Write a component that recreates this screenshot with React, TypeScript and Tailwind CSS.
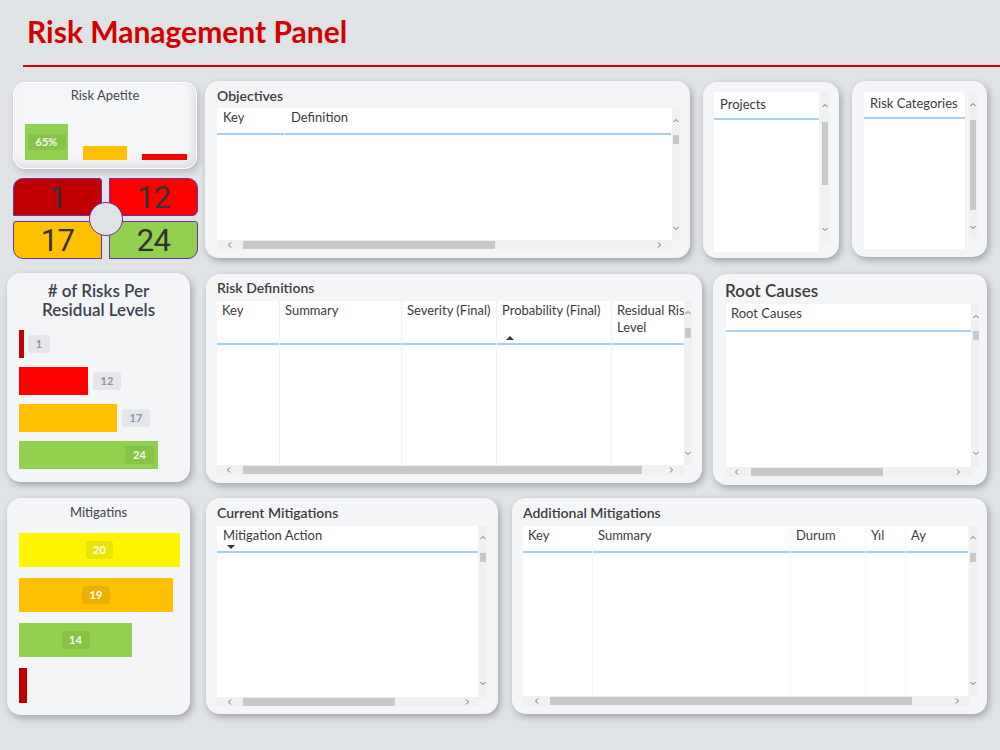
import React from 'react';

type Dir = 'up' | 'down' | 'left' | 'right';

const Chev = ({ dir }: { dir: Dir }) => {
  const pts = {
    up: '1.5,5 4,2.5 6.5,5',
    down: '1.5,3 4,5.5 6.5,3',
    left: '5,1.5 2.5,4 5,6.5',
    right: '3,1.5 5.5,4 3,6.5',
  }[dir];
  return (
    <svg width="8" height="8" viewBox="0 0 8 8" className="block shrink-0">
      <polyline points={pts} fill="none" stroke="#707070" strokeWidth="1" />
    </svg>
  );
};

const VScroll = ({ box, up, thumb, down }: { box: string; up: string; thumb: string; down: string }) => (
  <div className={`flex shrink-0 flex-col items-center bg-[#f0f0f0] ${box}`}>
    <div className={up}>
      <Chev dir="up" />
    </div>
    <div className={`w-[6px] bg-[#c8c8c8] ${thumb}`} />
    <div className="flex-1" />
    <div className={down}>
      <Chev dir="down" />
    </div>
  </div>
);

const HScroll = ({ box, left, thumb, right }: { box: string; left: string; thumb: string; right: string }) => (
  <div className={`flex shrink-0 items-center bg-[#f0f0f0] ${box}`}>
    <div className={left}>
      <Chev dir="left" />
    </div>
    <div className={`h-[8px] bg-[#c8c8c8] ${thumb}`} />
    <div className="flex-1" />
    <div className={right}>
      <Chev dir="right" />
    </div>
  </div>
);

const SortUp = () => (
  <div className="ml-[4px] mt-auto mb-[3px] h-0 w-0 border-x-[4px] border-b-[4px] border-x-transparent border-b-[#333]" />
);
const SortDown = () => (
  <div className="ml-[4px] mt-[1px] h-0 w-0 border-x-[4px] border-t-[4px] border-x-transparent border-t-[#333]" />
);

type Col = { label: React.ReactNode; w: string; sort?: React.ReactNode };

// line = colour of the column separators running through the body
const Columns = ({
  cols,
  head,
  pad = 'px-[5px]',
  line = 'border-[#f1f1f1]',
}: {
  cols: Col[];
  head: string;
  pad?: string;
  line?: string;
}) => (
  <div className="flex h-full">
    {cols.map((c, i) => (
      <div key={i} className={`flex shrink-0 flex-col border-r ${line} ${c.w}`}>
        <div
          className={`flex flex-col border-b-2 border-[#a3d1f5] pt-[1px] text-[13px] leading-[17px] text-[#3b3b3b] ${pad} ${head}`}
        >
          <span>{c.label}</span>
          {c.sort}
        </div>
      </div>
    ))}
  </div>
);

const Table = ({
  white,
  children,
  vs,
  hs,
}: {
  white: string;
  children: React.ReactNode;
  vs: React.ReactNode;
  hs?: React.ReactNode;
}) => (
  <div className="flex flex-col">
    <div className="flex items-start">
      <div className={`shrink-0 overflow-hidden bg-white ${white}`}>{children}</div>
      {vs}
    </div>
    {hs}
  </div>
);

const Panel = ({ className, children }: { className: string; children?: React.ReactNode }) => (
  <div className={`shrink-0 rounded-[14px] bg-[#f4f5f7] shadow-[2px_3px_7px_rgba(0,0,0,0.28)] ${className}`}>
    {children}
  </div>
);

const Title = ({ children, className = '' }: { children: React.ReactNode; className?: string }) => (
  <div className={`text-[14px] font-semibold leading-[18px] text-[#3d3d3d] ${className}`}>{children}</div>
);

const Tag = ({ children, className }: { children: React.ReactNode; className: string }) => (
  <div className={`flex h-[18px] items-center justify-center rounded-[3px] text-[11px] font-bold ${className}`}>
    {children}
  </div>
);

const RiskApetite = () => (
  <div className="flex h-[87px] w-[184px] flex-col rounded-[12px] border border-white bg-[#f5f6f7] pt-[4px] shadow-[inset_-3px_-4px_8px_rgba(0,0,0,0.1),2px_3px_6px_rgba(0,0,0,0.18)]">
    <div className="text-center text-[13px] leading-[16px] text-[#444a55]">Risk Apetite</div>
    <div className="ml-[11px] flex h-[57px] items-end gap-[15px]">
      <div className="flex h-[36px] w-[43px] items-center justify-center bg-[#92d050]">
        <div className="flex h-[16px] w-[38px] items-center justify-center bg-[#86c447] text-[11px] font-bold text-[#f3f8ec]">
          65%
        </div>
      </div>
      <div className="h-[14px] w-[44px] bg-[#ffc000]" />
      <div className="h-[6px] w-[45px] bg-[#ff0000]" />
    </div>
  </div>
);

const Quadrant = () => {
  const num = "text-[31px] leading-none tracking-tight text-[#333] font-['Roboto',sans-serif]";
  return (
    <div className="relative mt-[9px] grid h-[81px] w-[185px] grid-cols-2 grid-rows-2 gap-x-[7px] gap-y-[5px]">
      <div className={`flex items-center justify-center rounded-tl-[10px] rounded-tr-[3px] border border-[#7030a0] bg-[#c00000] ${num}`}>
        1
      </div>
      <div className={`flex items-center justify-center rounded-tr-[10px] rounded-br-[6px] border border-[#7030a0] bg-[#ff0000] ${num}`}>
        12
      </div>
      <div className={`flex items-center justify-center rounded-bl-[10px] rounded-tl-[3px] border border-[#7030a0] bg-[#ffc000] ${num}`}>
        17
      </div>
      <div className={`flex items-center justify-center rounded-br-[10px] rounded-tr-[3px] border border-[#7030a0] bg-[#92d050] ${num}`}>
        24
      </div>
      {/* round cut-out in the middle of the four tiles */}
      <div className="absolute left-1/2 top-1/2 h-[34px] w-[34px] -translate-x-1/2 -translate-y-1/2 rounded-full border border-[#7030a0] bg-[#dfe3e6]" />
    </div>
  );
};

const RisksPerLevel = () => (
  <Panel className="h-[209px] w-[183px] pt-[8px]">
    <div className="text-center text-[17px] font-semibold leading-[19px] text-[#3d4250]">
      # of Risks Per
      <br />
      Residual Levels
    </div>
    <div className="ml-[12px] mt-[11px] flex flex-col gap-[9px]">
      <div className="flex h-[28px] items-center gap-[4px]">
        <div className="h-full w-[5px] bg-[#c00000]" />
        <Tag className="w-[22px] bg-[#e4e6ea] text-[#8c95a6]">1</Tag>
      </div>
      <div className="flex h-[28px] items-center gap-[5px]">
        <div className="h-full w-[69px] bg-[#ff0000]" />
        <Tag className="w-[28px] bg-[#e4e6ea] text-[#8c95a6]">12</Tag>
      </div>
      <div className="flex h-[28px] items-center gap-[5px]">
        <div className="h-full w-[98px] bg-[#ffc000]" />
        <Tag className="w-[28px] bg-[#e4e6ea] text-[#8c95a6]">17</Tag>
      </div>
      <div className="flex h-[28px] w-[139px] items-center justify-end bg-[#92d050] pr-[4px]">
        <Tag className="w-[29px] bg-[#86c447] text-[#f4f9ee]">24</Tag>
      </div>
    </div>
  </Panel>
);

const Mitigatins = () => (
  <Panel className="h-[217px] w-[183px] pt-[6px]">
    <div className="text-center text-[13px] leading-[16px] text-[#3d4250]">Mitigatins</div>
    <div className="ml-[12px] mt-[13px] flex flex-col gap-[11px]">
      <div className="flex h-[34px] w-[161px] items-center justify-center bg-[#fff500]">
        <Tag className="w-[27px] bg-[#ebe300] text-white">20</Tag>
      </div>
      <div className="flex h-[34px] w-[154px] items-center justify-center bg-[#ffc000]">
        <Tag className="w-[28px] bg-[#ecb100] text-white">19</Tag>
      </div>
      <div className="flex h-[34px] w-[113px] items-center justify-center bg-[#92d050]">
        <Tag className="w-[28px] bg-[#86c447] text-white">14</Tag>
      </div>
      <div className="h-[35px] w-[8px] bg-[#c00000]" />
    </div>
  </Panel>
);

export default function App() {
  return (
    <div className="h-[750px] w-[1000px] overflow-hidden bg-[#dfe3e6] font-['Lato','Noto_Sans',sans-serif]">
      {/* header */}
      <div className="pl-[27px] pt-[13px] text-[30px] font-bold leading-[37px] text-[#d40000]">Risk Management Panel</div>
      <div className="ml-[23px] mt-[15px] h-[2px] bg-[#d40000]" />

      {/* row 1 */}
      <div className="mt-[14px] flex items-start">
        <div className="ml-[13px] mt-[1px] flex w-[185px] shrink-0 flex-col">
          <RiskApetite />
          <Quadrant />
        </div>

        <Panel className="ml-[7px] h-[177px] w-[485px] pl-[12px] pt-[6px]">
          <Title>Objectives</Title>
          <div className="mt-[3px]">
            <Table
              white="w-[455px] h-[132px]"
              vs={<VScroll box="w-[8px] h-[132px]" up="mt-[9px]" thumb="mt-[10px] h-[9px]" down="mb-[8px]" />}
              hs={<HScroll box="w-[455px] h-[9px]" left="ml-[9px]" thumb="ml-[9px] w-[252px]" right="mr-[9px]" />}
            >
              <Columns
                head="h-[27px]"
                pad="px-[6px]"
                line="border-transparent"
                cols={[
                  { label: 'Key', w: 'w-[68px]' },
                  { label: 'Definition', w: 'flex-1' },
                ]}
              />
            </Table>
          </div>
        </Panel>

        <Panel className="ml-[13px] mt-[1px] h-[176px] w-[136px] pl-[11px] pt-[10px]">
          <Table
            white="w-[106px] h-[160px]"
            vs={<VScroll box="ml-[1px] w-[8px] h-[150px]" up="mt-[10px]" thumb="mt-[12px] h-[63px]" down="mb-[9px]" />}
          >
            <Columns head="h-[28px] pt-[4px]" pad="px-[6px]" cols={[{ label: 'Projects', w: 'flex-1' }]} />
          </Table>
        </Panel>

        <Panel className="ml-[13px] h-[176px] w-[135px] pl-[12px] pt-[11px]">
          <Table
            white="w-[102px] h-[157px]"
            vs={<VScroll box="ml-[3px] w-[8px] h-[147px]" up="mt-[9px]" thumb="mt-[11px] h-[90px]" down="mb-[8px]" />}
          >
            <Columns head="h-[27px] pt-[3px]" pad="px-[6px]" cols={[{ label: 'Risk Categories', w: 'flex-1' }]} />
          </Table>
        </Panel>
      </div>

      {/* row 2 */}
      <div className="mt-[14px] flex items-start">
        <div className="ml-[7px]">
          <RisksPerLevel />
        </div>

        <Panel className="ml-[16px] mt-[1px] h-[209px] w-[496px] pl-[11px] pt-[5px]">
          <Title>Risk Definitions</Title>
          <div className="mt-[4px]">
            <Table
              white="w-[467px] h-[164px]"
              vs={<VScroll box="w-[8px] h-[164px]" up="mt-[8px]" thumb="mt-[11px] h-[10px]" down="mb-[8px]" />}
              hs={<HScroll box="w-[467px] h-[10px]" left="ml-[8px]" thumb="ml-[10px] w-[399px]" right="mr-[9px]" />}
            >
              <Columns
                head="h-[44px]"
                cols={[
                  { label: 'Key', w: 'w-[63px]' },
                  { label: 'Summary', w: 'w-[122px]' },
                  { label: 'Severity (Final)', w: 'w-[95px]' },
                  { label: 'Probability (Final)', w: 'w-[115px]', sort: <SortUp /> },
                  { label: 'Residual Risk Level', w: 'w-[100px]' },
                ]}
              />
            </Table>
          </div>
        </Panel>

        <Panel className="ml-[11px] mt-[1px] h-[211px] w-[274px] pl-[13px] pt-[7px]">
          <div className="-ml-[1px] text-[17px] font-semibold leading-[20px] text-[#3d3d3d]">Root Causes</div>
          <div className="mt-[3px]">
            <Table
              white="w-[246px] h-[163px]"
              vs={<VScroll box="w-[7px] h-[163px]" up="mt-[9px]" thumb="mt-[10px] h-[9px]" down="mb-[10px]" />}
              hs={<HScroll box="w-[246px] h-[10px]" left="ml-[7px]" thumb="ml-[10px] w-[132px]" right="mr-[10px]" />}
            >
              <Columns head="h-[28px]" cols={[{ label: 'Root Causes', w: 'flex-1' }]} />
            </Table>
          </div>
        </Panel>
      </div>

      {/* row 3 */}
      <div className="mt-[13px] flex items-start">
        <div className="ml-[7px]">
          <Mitigatins />
        </div>

        <Panel className="ml-[16px] h-[216px] w-[292px] pl-[11px] pt-[6px]">
          <Title>Current Mitigations</Title>
          <div className="mt-[4px]">
            <Table
              white="w-[262px] h-[171px]"
              vs={<VScroll box="w-[8px] h-[171px]" up="mt-[8px]" thumb="mt-[11px] h-[9px]" down="mb-[10px]" />}
              hs={<HScroll box="w-[262px] h-[9px]" left="ml-[9px]" thumb="ml-[9px] w-[152px]" right="mr-[8px]" />}
            >
              <Columns
                head="h-[27px]"
                pad="px-[6px]"
                cols={[{ label: 'Mitigation Action', w: 'flex-1', sort: <SortDown /> }]}
              />
            </Table>
          </div>
        </Panel>

        <Panel className="ml-[14px] h-[216px] w-[475px] pl-[11px] pt-[6px]">
          <Title>Additional Mitigations</Title>
          <div className="mt-[4px]">
            <Table
              white="w-[446px] h-[170px]"
              vs={<VScroll box="w-[8px] h-[170px]" up="mt-[8px]" thumb="mt-[11px] h-[9px]" down="mb-[9px]" />}
              hs={<HScroll box="w-[446px] h-[10px]" left="ml-[10px]" thumb="ml-[9px] w-[362px]" right="mr-[8px]" />}
            >
              <Columns
                head="h-[27px]"
                line="border-[#f7f7f7]"
                cols={[
                  { label: 'Key', w: 'w-[70px]' },
                  { label: 'Summary', w: 'w-[198px]' },
                  { label: 'Durum', w: 'w-[75px]' },
                  { label: 'Yıl', w: 'w-[40px]' },
                  { label: 'Ay', w: 'flex-1' },
                ]}
              />
            </Table>
          </div>
        </Panel>
      </div>
    </div>
  );
}
